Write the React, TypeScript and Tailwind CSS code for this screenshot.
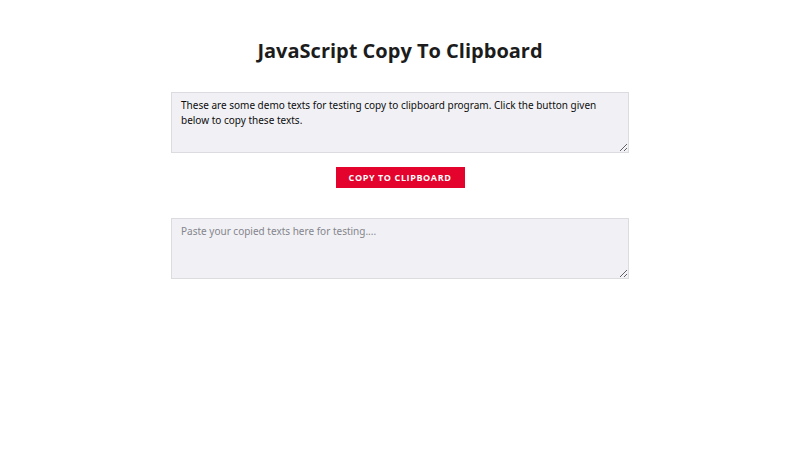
import React, { useRef, useState } from 'react';

const App: React.FC = () => {
  const [text, setText] = useState(
    'These are some demo texts for testing copy to clipboard program. Click the button given below to copy these texts.'
  );
  const [paste, setPaste] = useState('');
  const sourceRef = useRef<HTMLTextAreaElement>(null);

  const copyText = () => {
    sourceRef.current?.select();
    navigator.clipboard?.writeText(text).catch(() => {});
  };

  return (
    <div className="min-h-screen bg-white font-['Noto_Sans',sans-serif] text-[#1c1c1c]">
      <div className="mx-auto flex w-[458px] flex-col items-center pt-[37px]">
        <h1 className="font-['Open_Sans',sans-serif] text-[20px] leading-[28px] font-bold">JavaScript Copy To Clipboard</h1>

        <textarea
          ref={sourceRef}
          value={text}
          onChange={(e) => setText(e.target.value)}
          className="mt-[27px] block h-[61px] w-full resize-y border border-[#dcdce0] bg-[#f1f1f5] px-[9px] py-[5px] text-[10px] leading-[15px] text-[#0d0d0d] outline-none"
        />

        <button
          onClick={copyText}
          className="mt-[14px] h-[21px] w-[129px] bg-[#e4032c] font-['Open_Sans',sans-serif] text-[9px] font-bold tracking-[0.6px] text-white uppercase"
        >
          Copy to clipboard
        </button>

        <textarea
          value={paste}
          onChange={(e) => setPaste(e.target.value)}
          placeholder="Paste your copied texts here for testing...."
          className="mt-[30px] block h-[61px] w-full resize-y border border-[#dcdce0] bg-[#f1f1f5] px-[9px] py-[5px] text-[10px] leading-[15px] text-[#0d0d0d] outline-none placeholder:text-[#85858c]"
        />
      </div>
    </div>
  );
};

export default App;
